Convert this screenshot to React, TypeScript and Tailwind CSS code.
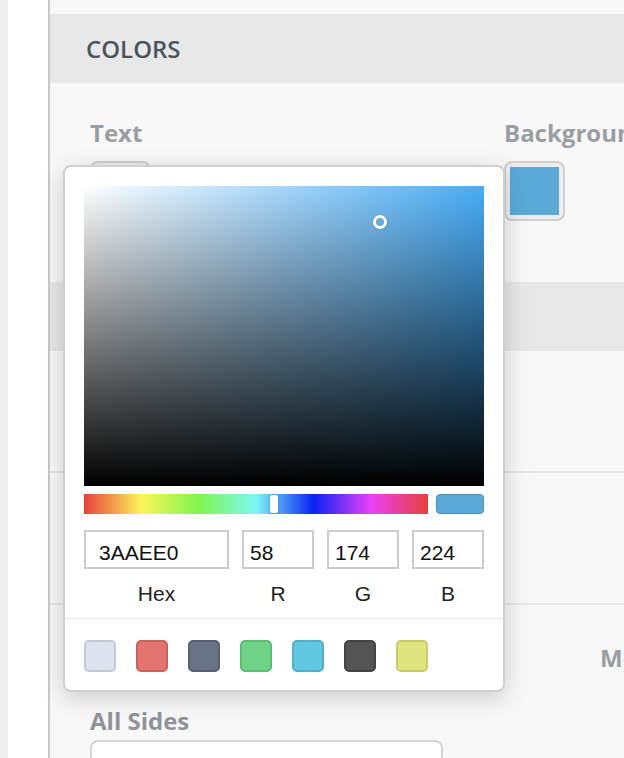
import React from "react";

const swatches = [
  { fill: "bg-[#dce2ee]", border: "border-[#c3cad3]" },
  { fill: "bg-[#e37470]", border: "border-[#c9625e]" },
  { fill: "bg-[#687387]", border: "border-[#586173]" },
  { fill: "bg-[#6fd488]", border: "border-[#5cba72]" },
  { fill: "bg-[#62c7e0]", border: "border-[#4fb0c8]" },
  { fill: "bg-[#545454]", border: "border-[#444444]" },
  { fill: "bg-[#e0e47e]", border: "border-[#c7cb69]" },
];

const label = "text-[24px] leading-[32px] font-bold text-[#9a9ea2] font-['Open_Sans',sans-serif]";

function SectionHeader({ title }: { title: string }) {
  return (
    <div className="h-[69px] bg-[#e8e8e8] px-[36px] flex items-center">
      <span className="text-[24px] font-semibold text-[#4a555b] font-['Open_Sans',sans-serif] tracking-[0px]">
        {title}
      </span>
    </div>
  );
}

function ColorPicker() {
  const fields = [
    { value: "3AAEE0", label: "Hex", pad: "pl-[13px]" },
    { value: "58", label: "R", pad: "pl-[6px]" },
    { value: "174", label: "G", pad: "pl-[6px]" },
    { value: "224", label: "B", pad: "pl-[6px]" },
  ];
  return (
    <div className="absolute left-[63px] top-[165px] w-[442px] bg-white border-2 border-[#d0d0d0] rounded-[8px] shadow-[0_6px_24px_rgba(0,0,0,0.18)] font-['Liberation_Sans',Arial,sans-serif]">
      <div className="px-[19px] pt-[19px]">
        {/* saturation / value area */}
        <div className="relative h-[300px] w-[400px] bg-[#47adf7]">
          <div className="absolute inset-0 bg-[linear-gradient(to_right,#ffffff,rgba(255,255,255,0))]" />
          <div className="absolute inset-0 bg-[linear-gradient(to_bottom,rgba(0,0,0,0),#000000)]" />
          <div className="absolute left-[289px] top-[29px] w-[14px] h-[14px] rounded-full border-[3px] border-white shadow-[0_0_1px_rgba(0,0,0,0.5)]" />
        </div>

        {/* hue + preview */}
        <div className="mt-[8px] flex gap-[8px] h-[20px]">
          <div className="relative w-[344px] h-full bg-[linear-gradient(to_right,#e8403a_0%,#fbf65c_16.67%,#7ff54c_33.33%,#7ef7f8_50%,#0b22f5_66.67%,#e941f6_83.33%,#e8403a_100%)]">
            <div className="absolute left-[186px] top-[1px] w-[8px] h-[18px] rounded-[2px] bg-white shadow-[0_0_2px_rgba(0,0,0,0.4)]" />
          </div>
          <div className="flex-1 rounded-[4px] bg-[#5aa9d8] border border-[#4a8db8]" />
        </div>

        {/* inputs */}
        <div className="mt-[16px] grid grid-cols-[145px_1fr_1fr_1fr] gap-x-[13px]">
          {fields.map((f) => (
            <div
              key={f.label}
              className={`h-[39px] border-2 border-[#cccccc] flex items-center text-[21px] text-[#111111] ${f.pad}`}
            >
              <span className="mt-[6px]">{f.value}</span>
            </div>
          ))}
          {fields.map((f) => (
            <div key={f.label + "l"} className="mt-[10px] h-[30px] leading-[30px] text-center text-[21px] text-[#222222]">
              {f.label}
            </div>
          ))}
        </div>
      </div>

      <div className="mt-[9px] h-[1px] bg-[#ebebeb]" />

      {/* presets */}
      <div className="px-[19px] pt-[21px] pb-[18px] flex gap-[20px]">
        {swatches.map((s, i) => (
          <div key={i} className={`w-[32px] h-[32px] rounded-[5px] border-2 ${s.fill} ${s.border}`} />
        ))}
      </div>
    </div>
  );
}

export default function App() {
  return (
    <div className="relative flex h-[758px] w-[624px] overflow-hidden bg-[#f8f8f8]">
      {/* left rail */}
      <div className="w-[8px] shrink-0 bg-[#f0f0f0]" />
      <div className="w-[40px] shrink-0 bg-white" />
      <div className="w-[2px] shrink-0 bg-[#c8c8c8]" />

      {/* main panel */}
      <div className="w-[700px] shrink-0 pt-[14px] bg-[#f8f8f8]">
        <SectionHeader title="COLORS" />
        <div className="h-[199px] pl-[40px] pt-[34px] grid grid-cols-[414px_1fr]">
          <div>
            <div className={label}>Text</div>
            <div className="mt-[12px] w-[61px] h-[60px] rounded-[8px] border-2 border-[#cfcfcf] bg-[#eeeeee] p-[4px]">
              <div className="w-full h-full bg-[#e2e2e2]" />
            </div>
          </div>
          <div>
            <div className={label}>Background</div>
            <div className="mt-[12px] w-[61px] h-[60px] rounded-[8px] border-2 border-[#cfcfcf] bg-[#eeeeee] p-[4px]">
              <div className="w-full h-full bg-[#5aa9d8]" />
            </div>
          </div>
        </div>

        <SectionHeader title="BORDER" />
        <div className="h-[122px] border-b-2 border-[#e6e6e6]" />
        <div className="h-[132px] border-b-2 border-[#e6e6e6]" />
        <div className="pl-[40px] pt-[37px]">
          <div className="flex">
            <div className={`w-[510px] ${label}`}>Radius</div>
            <div className={label}>Mode</div>
          </div>
          <div className={`mt-[31px] ${label} text-[#909498]`}>All Sides</div>
          <div className="mt-[3px] w-[353px] h-[44px] rounded-[8px] border-2 border-[#d3d7dc] bg-white" />
        </div>
      </div>

      <ColorPicker />
    </div>
  );
}
